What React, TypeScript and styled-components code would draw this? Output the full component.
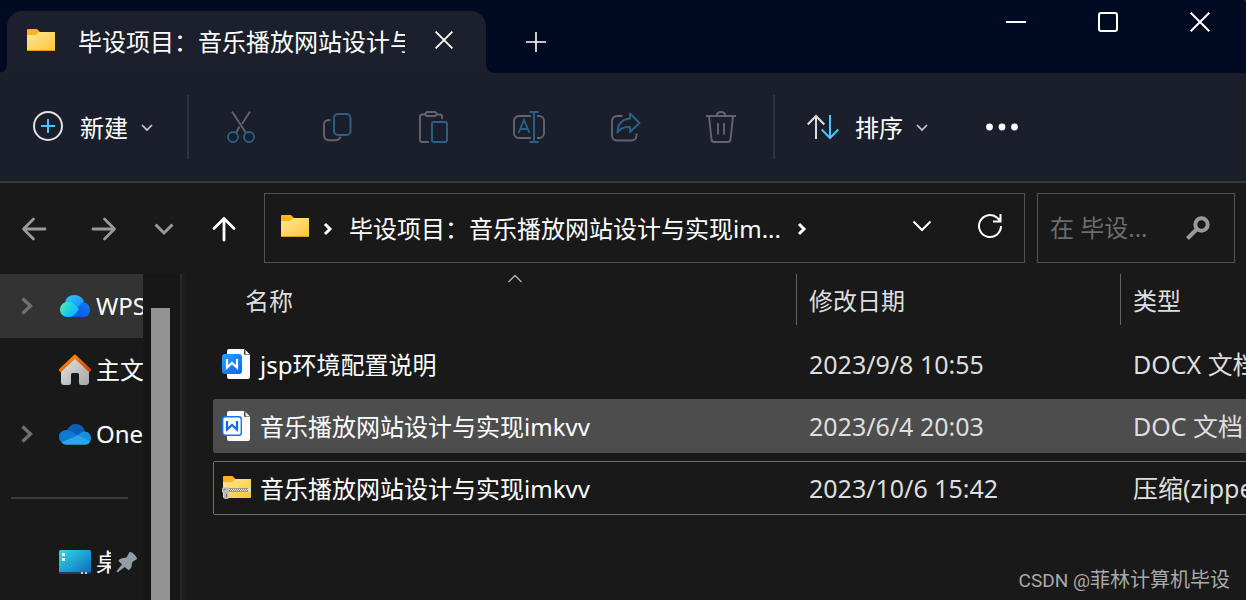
import React from "react";
import styled, { createGlobalStyle } from "styled-components";

const GlobalStyle = createGlobalStyle`
  *, *::before, *::after { box-sizing: border-box; }
  body {
    margin: 0;
    background: #33363c;
    font-family: "Noto Sans", "Noto Sans CJK SC", sans-serif;
    font-size: 24px;
    line-height: 32px;
    color: #ffffff;
  }
  svg { display: block; flex: none; }
`;

const PlainButton = styled.button`
  display: flex;
  align-items: center;
  justify-content: center;
  flex: none;
  padding: 0;
  border: 0;
  background: none;
  color: inherit;
  font: inherit;
  white-space: nowrap;
`;

const ExplorerWindow = styled.div`
  position: relative;
  display: flex;
  flex-direction: column;
  height: 100vh;
  overflow: hidden;
  background: #191919;
  border-top-right-radius: 4px;
`;

/* Title bar */

const TitleBar = styled.header`
  display: flex;
  align-items: flex-end;
  flex: none;
  height: 73px;
  padding-left: 7px;
  background: #000a20;
`;

const Tab = styled.div`
  position: relative;
  display: flex;
  align-items: center;
  flex: 0 1 479px;
  min-width: 0;
  height: 62px;
  padding: 0 3px 4px 20px;
  border-radius: 15px 15px 0 0;
  background: #1b202c;

  &::before,
  &::after {
    content: "";
    position: absolute;
    bottom: 0;
    width: 7px;
    height: 7px;
  }
  &::before {
    right: 100%;
    background: radial-gradient(circle at 0 0, transparent 6px, #1b202c 7px);
  }
  &::after {
    left: 100%;
    background: radial-gradient(circle at 100% 0, transparent 6px, #1b202c 7px);
  }
`;

const TabLabel = styled.span`
  flex: 1;
  min-width: 0;
  margin-left: 23px;
  padding-top: 4px;
  overflow: hidden;
  white-space: nowrap;
`;

const TabClose = styled(PlainButton)`
  width: 78px;
  height: 40px;
`;

const NewTab = styled(PlainButton)`
  width: 100px;
  height: 62px;
`;

const WindowControls = styled.div`
  display: flex;
  align-self: flex-start;
  margin-left: auto;
`;

const ControlButton = styled(PlainButton)`
  width: 92px;
  height: 44px;
`;

/* Command bar */

const CommandBar = styled.div`
  display: flex;
  align-items: center;
  flex: none;
  height: 110px;
  border-bottom: 2px solid #39393c;
  background: #1b1f2c;
`;

const MenuButton = styled(PlainButton)<{ $start: number }>`
  height: 64px;
  padding: 0 30px 0 ${(p) => p.$start}px;
`;

const MenuText = styled.span`
  margin: 0 13px 0 16px;
  padding-top: 2px;
`;

const IconButton = styled(PlainButton)`
  width: 96px;
  height: 64px;
`;

const MoreButton = styled(PlainButton)`
  width: 88px;
  height: 64px;
`;

const BarDivider = styled.span`
  flex: none;
  width: 2px;
  height: 64px;
  margin: 0 4px;
  background: #2f333e;
`;

/* Navigation row */

const NavRow = styled.nav`
  display: flex;
  align-items: center;
  flex: none;
  height: 91px;
  padding: 0 11px 1px 0;
`;

const NavButton = styled(PlainButton)<{ $width: number }>`
  width: ${(p) => p.$width}px;
  height: 64px;
  padding-top: 2px;
`;

const AddressBar = styled.div`
  display: flex;
  align-items: center;
  flex: 1;
  min-width: 0;
  height: 70px;
  margin: 0 12px 0 4px;
  padding: 0 0 4px 16px;
  border: 1px solid #535353;
`;

const CrumbTrail = styled.div`
  display: flex;
  align-items: center;
  gap: 16px;
  min-width: 0;
  margin-left: 14px;
  padding-top: 6px;
`;

const Crumb = styled.a`
  min-width: 0;
  overflow: hidden;
  color: inherit;
  text-decoration: none;
  white-space: nowrap;
`;

const AddressActions = styled.div`
  display: flex;
  margin-left: auto;
`;

const AddressButton = styled(PlainButton)`
  width: 68px;
  height: 60px;
`;

const SearchBox = styled.label`
  display: flex;
  align-items: center;
  flex: none;
  width: 198px;
  height: 70px;
  padding: 0 24px 0 12px;
  border: 1px solid #535353;
`;

const SearchInput = styled.input`
  flex: 1;
  min-width: 0;
  padding: 0;
  border: 0;
  outline: 0;
  background: none;
  color: #ffffff;
  font: inherit;

  &::placeholder {
    color: #6c6c6c;
    opacity: 1;
  }
`;

/* Body */

const Body = styled.div`
  display: flex;
  flex: 1;
  min-height: 0;
`;

const Sidebar = styled.aside`
  flex: none;
  width: 143px;
  overflow: hidden;
`;

const SideItem = styled.a<{ $active?: boolean }>`
  display: flex;
  align-items: center;
  height: 64px;
  padding-left: 20px;
  background: ${(p) => (p.$active ? "#333333" : "transparent")};
  color: inherit;
  text-decoration: none;
  white-space: nowrap;
`;

const SideArrow = styled.span`
  flex: none;
  width: 39px;
`;

const SideLabel = styled.span<{ $pinned?: boolean }>`
  flex: ${(p) => (p.$pinned ? "0 0 15px" : "1")};
  min-width: 0;
  margin-left: 5px;
  margin-right: ${(p) => (p.$pinned ? 5 : 0)}px;
  overflow: hidden;
`;

const SideRule = styled.hr`
  height: 2px;
  margin: 31px 15px 31px 11px;
  border: 0;
  background: #3a3a3a;
`;

const ScrollTrack = styled.div`
  flex: none;
  width: 37px;
  padding: 34px 10px 0 8px;
  background: #171717;
`;

const ScrollThumb = styled.div`
  height: 100%;
  background: #939393;
`;

const PaneEdge = styled.div`
  flex: none;
  width: 5px;
  border-left: 2px solid #2a2a2a;
  background: #1e1e1e;
`;

const FilePane = styled.main`
  flex: 1;
  min-width: 0;
  padding-left: 28px;
  overflow: hidden;
`;

const FileTable = styled.table`
  display: flex;
  flex-direction: column;
  gap: 8px;
  min-width: 1100px;
`;

const TableHead = styled.thead`
  display: block;
`;

const TableBody = styled.tbody`
  display: flex;
  flex-direction: column;
  gap: 8px;
`;

const HeadRow = styled.tr`
  display: grid;
  grid-template-columns: 564px 324px 1fr;
  height: 55px;
  margin-left: 20px;
`;

const HeadCell = styled.th<{ $last?: boolean }>`
  position: relative;
  height: 51px;
  padding: 11px 12px 0;
  border-right: ${(p) => (p.$last ? "0" : "1px solid #636363")};
  color: #dedede;
  font-weight: 400;
  text-align: left;
`;

const SortMark = styled.span`
  position: absolute;
  top: 0;
  left: 50%;
  margin-left: -7px;
`;

const FileRow = styled.tr<{ $state?: "hover" | "focus" }>`
  display: grid;
  grid-template-columns: 583px 324px 1fr;
  height: 54px;
  border: 1px solid
    ${(p) =>
      p.$state === "hover" ? "#4d4d4d" : p.$state === "focus" ? "#6e6e6e" : "transparent"};
  border-radius: 2px;
  background: ${(p) => (p.$state === "hover" ? "#4d4d4d" : "transparent")};
`;

const NameCell = styled.td`
  display: flex;
  align-items: center;
  gap: 8px;
  padding: 0 8px;
  white-space: nowrap;
`;

const FileName = styled.span`
  padding-top: 2px;
`;

const InfoCell = styled.td`
  padding: 10px 12px;
  color: #dedede;
  font-size: 25px;
  white-space: nowrap;
`;

const Watermark = styled.div`
  position: absolute;
  right: 16px;
  bottom: 3px;
  color: #a9a9a9;
  font-family: Roboto, "Noto Sans CJK SC", sans-serif;
  font-size: 20px;
`;

const WatermarkBrand = styled.span`
  font-size: 19px;
`;

/* Icons */

const DIM = "#62656e";
const DIM_BLUE = "#2a6187";

const Folder = () => (
  <svg width="28" height="24" viewBox="0 0 28 24">
    <defs>
      <linearGradient id="folderFace" x1="0" y1="0" x2="1" y2="1">
        <stop offset="0" stopColor="#ffe69a" />
        <stop offset="1" stopColor="#fdc733" />
      </linearGradient>
    </defs>
    <path d="M0 2a1 1 0 0 1 1-1h9l3 3h14a1 1 0 0 1 1 1v5H0z" fill="#fbb41a" />
    <path d="M0 7h9l3-3h15a1 1 0 0 1 1 1v17a1 1 0 0 1-1 1H1a1 1 0 0 1-1-1z" fill="url(#folderFace)" />
    <path d="M0 22.500h28" stroke="#dba01c" strokeWidth="1" />
  </svg>
);

const CloseMark = ({ size }: { size: number }) => (
  <svg width={size} height={size} viewBox="0 0 20 20" stroke="#fff" strokeWidth="2" fill="none">
    <path d="M.7.7l18.600 18.600M19.300.7L.7 19.300" />
  </svg>
);

const SmallDown = () => (
  <svg width="12" height="12" viewBox="0 0 12 12" stroke="#c8c9cc" strokeWidth="1.700" fill="none">
    <path d="M1 4l5 5 5-5" />
  </svg>
);

const NewIcon = () => (
  <svg width="32" height="32" viewBox="0 0 32 32" fill="none" strokeWidth="2">
    <circle cx="16" cy="15" r="14" stroke="#e2e2e4" />
    <path d="M16 8v14M9 15h14" stroke="#4cc2ff" />
  </svg>
);

const CutIcon = () => (
  <svg width="32" height="32" viewBox="0 0 32 32" fill="none" strokeWidth="1.800">
    <path d="M7 .5l14 21.500M25 .5l-8 12.500M14.500 15.500L11 22" stroke={DIM} />
    <circle cx="8" cy="26" r="5" stroke={DIM_BLUE} />
    <circle cx="24" cy="26" r="5" stroke={DIM_BLUE} />
  </svg>
);

const CopyIcon = () => (
  <svg width="32" height="32" viewBox="0 0 32 32" fill="none" strokeWidth="1.900">
    <path d="M9.500 9C5 9 3 10 3 13.500V24c0 3.500 2 5.200 5.500 5.200H14c3 0 5-1.200 5.500-3.700" stroke={DIM} />
    <rect x="13" y="3" width="16.500" height="21" rx="4" stroke={DIM_BLUE} />
  </svg>
);

const PasteIcon = () => (
  <svg width="32" height="32" viewBox="0 0 32 32" fill="none" strokeWidth="1.900">
    <path d="M8.500 3.500H5a2 2 0 0 0-2 2V29a2 2 0 0 0 2 2h7M19 3.500h4a2 2 0 0 1 2 2V8" stroke={DIM} />
    <rect x="8.500" y="1" width="11" height="4" rx="2" stroke={DIM} />
    <rect x="15" y="11" width="15" height="20" rx="1.500" stroke={DIM_BLUE} />
  </svg>
);

const RenameIcon = () => (
  <svg width="32" height="32" viewBox="0 0 32 32" fill="none" strokeWidth="1.900">
    <path d="M18 5H6a5 5 0 0 0-5 5v12a5 5 0 0 0 5 5h12M24 5h2a5 5 0 0 1 5 5v12a5 5 0 0 1-5 5h-2" stroke={DIM} />
    <path d="M16.500 1h9M16.500 31h9M21 1v30" stroke={DIM_BLUE} />
    <path d="M5.500 22l5.500-13 5.500 13M7 18h8" stroke={DIM_BLUE} />
  </svg>
);

const ShareIcon = () => (
  <svg width="32" height="32" viewBox="0 0 32 32" fill="none" strokeWidth="1.900" strokeLinejoin="round">
    <path d="M13.500 5H8a5 5 0 0 0-5 5v14.500a5 5 0 0 0 5 5h14.500a5 5 0 0 0 5-5V22.500" stroke={DIM} />
    <path d="M21 2.500l9.500 9.500-9.500 9v-5C15 15.500 11 17.500 8.500 21.500 8.500 13.500 13 8.500 21 7.500z" stroke={DIM_BLUE} />
  </svg>
);

const TrashIcon = () => (
  <svg width="32" height="32" viewBox="0 0 32 32" fill="none" stroke={DIM} strokeWidth="1.900">
    <path d="M1 5h30M11.500 5c.3-2.700 2-4 4.500-4s4.200 1.300 4.500 4" />
    <path d="M4 5l2.500 23.500C6.700 30 7.600 31 9 31h14c1.400 0 2.300-1 2.500-2.500L28 5M13 12v11.500M19 12v11.500" />
  </svg>
);

const SortIcon = () => (
  <svg width="32" height="32" viewBox="0 0 32 32" fill="none" strokeWidth="2">
    <path d="M9 28V5M.7 13.500L9 5l8.300 8.500" stroke="#dcdcde" />
    <path d="M23 4v23M14.700 18.500L23 27l8.300-8.500" stroke="#4cc2ff" />
  </svg>
);

const MoreIcon = () => (
  <svg width="34" height="32" viewBox="0 0 34 32" fill="#fff">
    <circle cx="4.500" cy="16" r="3.400" />
    <circle cx="17" cy="16" r="3.400" />
    <circle cx="29.500" cy="16" r="3.400" />
  </svg>
);

const Arrow = ({ turn, color }: { turn: number; color: string }) => (
  <svg
    width="26"
    height="26"
    viewBox="0 0 26 26"
    fill="none"
    stroke={color}
    strokeWidth="2.800"
    strokeLinecap="round"
    strokeLinejoin="round"
  >
    <path d="M24 13H2.500M12.500 3L2.500 13l10 10" transform={`rotate(${turn} 13 13)`} />
  </svg>
);

const CrumbArrow = () => (
  <svg width="10" height="14" viewBox="0 0 10 14" fill="none" stroke="#fff" strokeWidth="3">
    <path d="M2 2l5 5-5 5" />
  </svg>
);

const BigDown = ({ color, weight }: { color: string; weight: number }) => (
  <svg width="20" height="14" viewBox="0 0 20 14" fill="none" stroke={color} strokeWidth={weight}>
    <path d="M1.500 2.500L10 11l8.500-8.500" />
  </svg>
);

const RefreshIcon = () => (
  <svg width="26" height="26" viewBox="0 0 26 26" fill="none" stroke="#fff" strokeWidth="2">
    <path d="M24 13a11 11 0 1 1-3.500-8L23 7.500M23.500 1v7.500H16" />
  </svg>
);

const SearchIcon = () => (
  <svg width="24" height="24" viewBox="0 0 24 24" fill="none" stroke="#999">
    <circle cx="15.500" cy="8.500" r="6.200" strokeWidth="4" />
    <path d="M11 13L1.500 22.500" strokeWidth="4" />
  </svg>
);

const TreeArrow = () => (
  <svg width="14" height="18" viewBox="0 0 14 18" fill="none" stroke="#6f6f6f" strokeWidth="3.400">
    <path d="M2.500 1.500L10.500 9l-8 7.500" />
  </svg>
);

const WpsCloud = () => (
  <svg width="32" height="32" viewBox="0 0 32 32">
    <defs>
      <linearGradient id="wpsLeft" x1="0" y1="0.200" x2="1" y2="0.800">
        <stop offset="0" stopColor="#4ff0a0" />
        <stop offset="0.600" stopColor="#10c8f4" />
        <stop offset="1" stopColor="#10b4ff" />
      </linearGradient>
      <linearGradient id="wpsTop" x1="0" y1="0" x2="1" y2="1">
        <stop offset="0" stopColor="#2ad0ff" />
        <stop offset="1" stopColor="#1684fa" />
      </linearGradient>
      <linearGradient id="wpsRight" x1="0" y1="1" x2="1" y2="0">
        <stop offset="0" stopColor="#0b4fd6" />
        <stop offset="1" stopColor="#0a7cff" />
      </linearGradient>
    </defs>
    <path d="M6 14C6 8 10.500 5 15.500 5S24 8 25 12l-6 8z" fill="url(#wpsTop)" />
    <path d="M10 27L22 13.500c2-2.500 9 0 9 6.500 0 4.500-3 7-6.500 7z" fill="url(#wpsRight)" />
    <path d="M9 27c-5 0-8-3.300-8-7.500S4.500 12 8.500 12c5 0 7 2.500 11.500 7-3 5-6 8-11 8z" fill="url(#wpsLeft)" />
  </svg>
);

const HomeIcon = () => (
  <svg width="32" height="32" viewBox="0 0 32 32">
    <defs>
      <linearGradient id="homeWall" x1="0" y1="0" x2="1" y2="1">
        <stop offset="0" stopColor="#e6e6e6" />
        <stop offset="1" stopColor="#a6a6a6" />
      </linearGradient>
      <linearGradient id="homeRoof" x1="0" y1="0" x2="1" y2="1">
        <stop offset="0" stopColor="#fb9a0c" />
        <stop offset="1" stopColor="#d2420a" />
      </linearGradient>
    </defs>
    <path d="M2 15L16 2l14 13v13a3 3 0 0 1-3 3h-5a2 2 0 0 1-2-2V20.500a1.500 1.500 0 0 0-1.500-1.500h-5a1.500 1.500 0 0 0-1.500 1.500V29a2 2 0 0 1-2 2H5a3 3 0 0 1-3-3z" fill="url(#homeWall)" />
    <path d="M1.700 16L16 2.500 30.300 16" fill="none" stroke="url(#homeRoof)" strokeWidth="3.600" strokeLinecap="round" strokeLinejoin="round" />
  </svg>
);

const OneDrive = () => (
  <svg width="32" height="32" viewBox="0 0 32 32">
    <path d="M8 12.500C9.500 8.500 12.500 6 16.500 6c5 0 8.500 3 9.500 7.500L18 18z" fill="#0a5fb8" />
    <path d="M3 24.500C1 23 0 21.500 0 19c0-4 3-7 7.500-7 2.500 0 4 .7 6 2l7 4.500L5 26z" fill="#0f7ad6" />
    <path d="M17 18l4-2.500c1.500-1.200 3-1.900 5-1.900 3.500 0 6 3 6 6.400 0 1.500-.5 3-1.500 4z" fill="#1490df" />
    <path d="M2.500 24.300L19 17.200l12.300 6c-1 2.300-3 3.600-5.300 3.600H7c-1.800 0-3.400-1-4.500-2.500z" fill="#28a8ea" />
  </svg>
);

const DesktopIcon = () => (
  <svg width="32" height="32" viewBox="0 0 32 32">
    <defs>
      <linearGradient id="desk" x1="0" y1="0" x2="1" y2="1">
        <stop offset="0" stopColor="#35d8e4" />
        <stop offset="1" stopColor="#0b69bd" />
      </linearGradient>
    </defs>
    <rect y="4" width="32" height="24" rx="1.500" fill="url(#desk)" />
    <path d="M0 26h32v1a1 1 0 0 1-1 1H1a1 1 0 0 1-1-1z" fill="#0a4477" />
    <path d="M3 7h3v3H3zM3 12h3v3H3z" fill="#fff" />
    <path d="M22 26h2v2h-2zM26 26h2v2h-2z" fill="#b9d6ea" />
  </svg>
);

const PinIcon = () => (
  <svg width="22" height="22" viewBox="0 0 22 22" fill="#929da4">
    <path d="M13.500 1c2.500-.8 7.500 4.500 7.500 7l-4.300 2.700c-.5.500-.7 1-.8 1.700 0 3-.8 5.500-3.200 6.800L8.500 16 2 21.300.7 21 .8 19.800 6 13.500 2.300 9.700c1.700-2 4-2.900 7-2.900.8 0 1.300-.4 1.700-1z" />
  </svg>
);

const WordFile = ({ outline }: { outline?: boolean }) => (
  <svg width="30" height="30" viewBox="0 0 30 30">
    <defs>
      <linearGradient id="wordFace" x1="0" y1="0" x2="1" y2="1">
        <stop offset="0" stopColor="#2aa2fb" />
        <stop offset="1" stopColor="#0a64f5" />
      </linearGradient>
    </defs>
    <path d="M5 2a2 2 0 0 1 2-2h15l6 6v22a2 2 0 0 1-2 2H7a2 2 0 0 1-2-2z" fill="#fbfcfe" />
    <path d="M22 0l6 6h-4.500A1.500 1.500 0 0 1 22 4.500z" fill="#3b4252" />
    <path d="M23.500 1L28 5.500h-3.500a1 1 0 0 1-1-1z" fill="#f4f6fa" />
    {outline ? (
      <rect x="0.700" y="5.700" width="18.600" height="18.600" rx="2.500" fill="#fff" stroke="#1670f2" strokeWidth="1.400" />
    ) : (
      <rect y="5" width="20" height="20" rx="3" fill="url(#wordFace)" />
    )}
    <path d="M5 10v8.500l5-4.500 5 4.500V10" fill="none" stroke={outline ? "#1268f0" : "#fff"} strokeWidth="2.200" />
  </svg>
);

const ZipFile = () => (
  <svg width="30" height="30" viewBox="0 0 30 30">
    <path d="M1 4a1 1 0 0 1 1-1h8.500l3 3H28a1 1 0 0 1 1 1v5H1z" fill="#fbb41a" />
    <path d="M1 9h9.500l3-3H28a1 1 0 0 1 1 1v17a1 1 0 0 1-1 1H2a1 1 0 0 1-1-1z" fill="url(#folderFace)" />
    <path d="M6 17h23" stroke="#8b8b86" strokeWidth="3.600" />
    <path d="M7 16.500h19" stroke="#f0ead0" strokeWidth="1" strokeDasharray="1 1" />
    <path d="M8 17.500h18" stroke="#f0ead0" strokeWidth="1" strokeDasharray="1 1" />
    <rect x="26" y="15" width="3" height="4" fill="#d8d8d8" />
    <path d="M0 15.500a1 1 0 0 1 1-1h6v5H6.500v5.500a1 1 0 0 1-1 1H3a1 1 0 0 1-1-1v-5.500H0z" fill="#b9b9b9" />
    <path d="M1.500 16.500h2M4.500 21v3" stroke="#76746c" strokeWidth="1.200" />
  </svg>
);

const commands = [
  { name: "剪切", icon: <CutIcon /> },
  { name: "复制", icon: <CopyIcon /> },
  { name: "粘贴", icon: <PasteIcon /> },
  { name: "重命名", icon: <RenameIcon /> },
  { name: "共享", icon: <ShareIcon /> },
  { name: "删除", icon: <TrashIcon /> },
];

const files: {
  name: string;
  date: string;
  type: string;
  icon: React.ReactNode;
  state?: "hover" | "focus";
}[] = [
  { name: "jsp环境配置说明", date: "2023/9/8 10:55", type: "DOCX 文档", icon: <WordFile /> },
  {
    name: "音乐播放网站设计与实现imkvv",
    date: "2023/6/4 20:03",
    type: "DOC 文档",
    icon: <WordFile outline />,
    state: "hover",
  },
  {
    name: "音乐播放网站设计与实现imkvv",
    date: "2023/10/6 15:42",
    type: "压缩(zipped)",
    icon: <ZipFile />,
    state: "focus",
  },
];

export default function App() {
  return (
    <>
      <GlobalStyle />
      <ExplorerWindow>
        <TitleBar>
          <Tab>
            <Folder />
            <TabLabel>毕设项目：音乐播放网站设计与</TabLabel>
            <TabClose aria-label="关闭标签页">
              <CloseMark size={18} />
            </TabClose>
          </Tab>
          <NewTab aria-label="新标签页">
            <svg width="20" height="20" viewBox="0 0 20 20" stroke="#fff" strokeWidth="1.600">
              <path d="M10 0v20M0 10h20" />
            </svg>
          </NewTab>
          <WindowControls>
            <ControlButton aria-label="最小化">
              <svg width="20" height="20" viewBox="0 0 20 20" stroke="#fff" strokeWidth="2">
                <path d="M0 10h20" />
              </svg>
            </ControlButton>
            <ControlButton aria-label="最大化">
              <svg width="20" height="20" viewBox="0 0 20 20" stroke="#fff" strokeWidth="2" fill="none">
                <rect x="1" y="1" width="18" height="18" rx="2" />
              </svg>
            </ControlButton>
            <ControlButton aria-label="关闭">
              <CloseMark size={20} />
            </ControlButton>
          </WindowControls>
        </TitleBar>

        <CommandBar>
          <MenuButton $start={32}>
            <NewIcon />
            <MenuText>新建</MenuText>
            <SmallDown />
          </MenuButton>
          <BarDivider />
          {commands.map((c) => (
            <IconButton key={c.name} aria-label={c.name}>
              {c.icon}
            </IconButton>
          ))}
          <BarDivider />
          <MenuButton $start={28}>
            <SortIcon />
            <MenuText>排序</MenuText>
            <SmallDown />
          </MenuButton>
          <MoreButton aria-label="更多">
            <MoreIcon />
          </MoreButton>
        </CommandBar>

        <NavRow>
          <NavButton $width={68} aria-label="后退">
            <Arrow turn={0} color="#999" />
          </NavButton>
          <NavButton $width={72} aria-label="前进">
            <Arrow turn={180} color="#999" />
          </NavButton>
          <NavButton $width={48} aria-label="最近位置">
            <BigDown color="#999" weight={3} />
          </NavButton>
          <NavButton $width={72} aria-label="向上">
            <Arrow turn={90} color="#fff" />
          </NavButton>
          <AddressBar>
            <Folder />
            <CrumbTrail>
              <CrumbArrow />
              <Crumb href="#folder">毕设项目：音乐播放网站设计与实现im...</Crumb>
              <CrumbArrow />
            </CrumbTrail>
            <AddressActions>
              <AddressButton aria-label="以前的位置">
                <BigDown color="#fff" weight={2} />
              </AddressButton>
              <AddressButton aria-label="刷新">
                <RefreshIcon />
              </AddressButton>
            </AddressActions>
          </AddressBar>
          <SearchBox aria-label="搜索">
            <SearchInput type="text" placeholder="在 毕设..." />
            <SearchIcon />
          </SearchBox>
        </NavRow>

        <Body>
          <Sidebar>
            <SideItem href="#wps" $active>
              <SideArrow>
                <TreeArrow />
              </SideArrow>
              <WpsCloud />
              <SideLabel>WPS</SideLabel>
            </SideItem>
            <SideItem href="#home">
              <SideArrow />
              <HomeIcon />
              <SideLabel>主文</SideLabel>
            </SideItem>
            <SideItem href="#onedrive">
              <SideArrow>
                <TreeArrow />
              </SideArrow>
              <OneDrive />
              <SideLabel>One</SideLabel>
            </SideItem>
            <SideRule />
            <SideItem href="#desktop">
              <SideArrow />
              <DesktopIcon />
              <SideLabel $pinned>桌</SideLabel>
              <PinIcon />
            </SideItem>
          </Sidebar>
          <ScrollTrack>
            <ScrollThumb />
          </ScrollTrack>
          <PaneEdge />
          <FilePane>
            <FileTable>
              <TableHead>
                <HeadRow>
                  <HeadCell>
                    名称
                    <SortMark>
                      <svg width="14" height="9" viewBox="0 0 14 9" fill="none" stroke="#b4b4b4" strokeWidth="1.300">
                        <path d="M.5 8L7 1.500 13.500 8" />
                      </svg>
                    </SortMark>
                  </HeadCell>
                  <HeadCell>修改日期</HeadCell>
                  <HeadCell $last>类型</HeadCell>
                </HeadRow>
              </TableHead>
              <TableBody>
                {files.map((f) => (
                  <FileRow key={f.date} $state={f.state}>
                    <NameCell>
                      {f.icon}
                      <FileName>{f.name}</FileName>
                    </NameCell>
                    <InfoCell>{f.date}</InfoCell>
                    <InfoCell>{f.type}</InfoCell>
                  </FileRow>
                ))}
              </TableBody>
            </FileTable>
          </FilePane>
        </Body>
        <Watermark>
          <WatermarkBrand>CSDN @</WatermarkBrand>菲林计算机毕设
        </Watermark>
      </ExplorerWindow>
    </>
  );
}
